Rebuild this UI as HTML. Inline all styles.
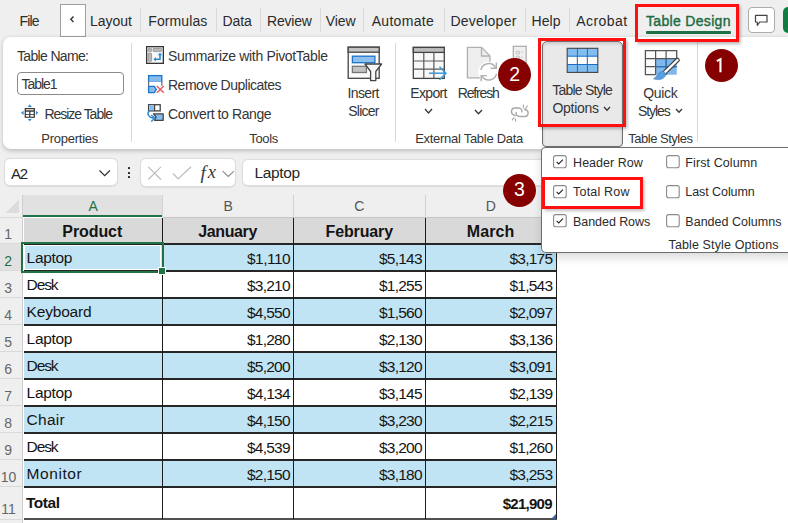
<!DOCTYPE html><html><head><meta charset="utf-8"><style>
html,body{margin:0;padding:0;}
body{width:788px;height:523px;overflow:hidden;position:relative;background:#efefef;font-family:"Liberation Sans",sans-serif;}
.t{position:absolute;white-space:nowrap;}
.b{position:absolute;}
svg.b{overflow:visible;}
</style></head><body>
<div class="t" style="left:19.50px;top:13.85px;font-size:14px;line-height:14px;color:#2b2b2b;letter-spacing:-0.847px;">File</div>
<div class="t" style="left:90.00px;top:13.85px;font-size:14px;line-height:14px;color:#2b2b2b;letter-spacing:-0.014px;">Layout</div>
<div class="t" style="left:148.30px;top:13.85px;font-size:14px;line-height:14px;color:#2b2b2b;letter-spacing:0.089px;">Formulas</div>
<div class="t" style="left:222.60px;top:13.85px;font-size:14px;line-height:14px;color:#2b2b2b;letter-spacing:-0.137px;">Data</div>
<div class="t" style="left:267.00px;top:13.85px;font-size:14px;line-height:14px;color:#2b2b2b;letter-spacing:-0.184px;">Review</div>
<div class="t" style="left:325.70px;top:13.85px;font-size:14px;line-height:14px;color:#2b2b2b;letter-spacing:-0.033px;">View</div>
<div class="t" style="left:371.70px;top:13.85px;font-size:14px;line-height:14px;color:#2b2b2b;letter-spacing:0.297px;">Automate</div>
<div class="t" style="left:450.40px;top:13.85px;font-size:14px;line-height:14px;color:#2b2b2b;letter-spacing:0.270px;">Developer</div>
<div class="t" style="left:531.40px;top:13.85px;font-size:14px;line-height:14px;color:#2b2b2b;letter-spacing:0.143px;">Help</div>
<div class="t" style="left:576.30px;top:13.85px;font-size:14px;line-height:14px;color:#2b2b2b;letter-spacing:0.412px;">Acrobat</div>
<div class="b" style="left:140px;top:8px;width:1.00px;height:24.00px;background:#d9d9d9;"></div>
<div class="b" style="left:216px;top:8px;width:1.00px;height:24.00px;background:#d9d9d9;"></div>
<div class="b" style="left:260px;top:8px;width:1.00px;height:24.00px;background:#d9d9d9;"></div>
<div class="b" style="left:320px;top:8px;width:1.00px;height:24.00px;background:#d9d9d9;"></div>
<div class="b" style="left:363px;top:8px;width:1.00px;height:24.00px;background:#d9d9d9;"></div>
<div class="b" style="left:444px;top:8px;width:1.00px;height:24.00px;background:#d9d9d9;"></div>
<div class="b" style="left:525px;top:8px;width:1.00px;height:24.00px;background:#d9d9d9;"></div>
<div class="b" style="left:569px;top:8px;width:1.00px;height:24.00px;background:#d9d9d9;"></div>
<div class="b" style="left:60px;top:3.5px;width:26.00px;height:33.00px;background:#fff;border:1px solid #a0a0a0;box-sizing:border-box;"></div>
<svg class="b" style="left:69px;top:15px" width="7" height="9" viewBox="0 0 7 9"><path d="M4.5 1.5 L1.8 4.3 L4.5 7" stroke="#333" stroke-width="1.4" fill="none"/></svg>
<div class="t" style="left:646.00px;top:13.85px;font-size:14px;line-height:14px;color:#1b6b3f;letter-spacing:0.325px;-webkit-text-stroke:0.4px #1b6b3f;">Table Design</div>
<div class="b" style="left:646px;top:31.3px;width:85.00px;height:2.50px;background:#1e7145;border-radius:1px;"></div>
<div class="b" style="left:748px;top:7.3px;width:26.50px;height:25.90px;background:#fff;border:1px solid #ababab;border-radius:4px;box-sizing:border-box;"></div>
<svg class="b" style="left:754px;top:14px" width="16" height="14" viewBox="0 0 16 14"><path d="M1.5 1.3 H13 V8 H5.8 L3.3 11.3 V8 H1.5 Z" stroke="#444" stroke-width="1.2" fill="none" stroke-linejoin="round"/></svg>
<div class="b" style="left:783.4px;top:7.3px;width:26.60px;height:26.20px;background:#107c41;border-radius:5px;"></div>
<div class="b" style="left:3px;top:37px;width:817.00px;height:111.50px;background:#fff;border-radius:8px;box-shadow:0 1.5px 4px rgba(0,0,0,.2);"></div>
<div class="b" style="left:131px;top:43px;width:1.00px;height:99.00px;background:#d8d8d8;"></div>
<div class="b" style="left:395.2px;top:43px;width:1.00px;height:99.00px;background:#d8d8d8;"></div>
<div class="b" style="left:697px;top:42px;width:1.00px;height:99.80px;background:#d8d8d8;"></div>
<div class="t" style="left:17.00px;top:48.85px;font-size:14px;line-height:14px;color:#353535;letter-spacing:-0.661px;">Table Name:</div>
<div class="b" style="left:17px;top:72px;width:106.50px;height:22.50px;border:1px solid #8a8a8a;border-radius:4px;box-sizing:border-box;background:#fff;"></div>
<div class="t" style="left:21.60px;top:77.15px;font-size:14px;line-height:14px;color:#353535;letter-spacing:-1.046px;">Table1</div>
<svg class="b" style="left:20px;top:103px" width="20" height="20" viewBox="0 0 20 20"><rect x="4.7" y="5" width="10.2" height="9.8" fill="#333"/>
<rect x="5.9" y="6.2" width="7.8" height="1.1" fill="#fff"/>
<rect x="5.9" y="8.7" width="3.3" height="2.4" fill="#fff"/><rect x="10.4" y="8.7" width="3.3" height="2.4" fill="#fff"/>
<rect x="5.9" y="11.9" width="3.3" height="1.8" fill="#fff"/><rect x="10.4" y="11.9" width="3.3" height="1.8" fill="#fff"/>
<path d="M9.8 1.3 L7.7 3.9 H11.9 Z M9.8 18.3 L7.7 15.9 H11.9 Z M1 9.8 L3.6 7.7 V11.9 Z M18.2 9.8 L15.9 7.7 V11.9 Z" fill="#2a8ad4"/></svg>
<div class="t" style="left:44.40px;top:106.55px;font-size:14px;line-height:14px;color:#353535;letter-spacing:-1.025px;">Resize Table</div>
<div class="t" style="left:41.30px;top:132.30px;font-size:13px;line-height:13px;color:#353535;letter-spacing:-0.253px;">Properties</div>
<svg class="b" style="left:145px;top:45px" width="20" height="20" viewBox="0 0 20 20"><rect x="1.65" y="1.65" width="16.7" height="16.7" fill="#f8f8f8" stroke="#333" stroke-width="1.3"/>
<rect x="3.3" y="3.3" width="3.3" height="3.3" rx="1" fill="#b8b8b8" stroke="#777" stroke-width=".6"/>
<rect x="8" y="3.3" width="8.6" height="3.3" rx="1" fill="#b8b8b8" stroke="#777" stroke-width=".6"/>
<rect x="3.3" y="8" width="3.3" height="8.6" rx="1" fill="#b8b8b8" stroke="#777" stroke-width=".6"/>
<path d="M10 14.3 H15 V9.5" stroke="#2a8ad4" stroke-width="1.6" fill="none"/>
<path d="M12.7 10.3 L15 7.7 L17.3 10.3 Z M10.9 12 L8.4 14.3 L10.9 16.6 Z" fill="#2a8ad4"/></svg>
<div class="t" style="left:168.00px;top:48.85px;font-size:14px;line-height:14px;color:#353535;letter-spacing:-0.336px;">Summarize with PivotTable</div>
<svg class="b" style="left:146px;top:74px" width="20" height="20" viewBox="0 0 20 20"><rect x="2.6" y="1.6" width="13.2" height="6" fill="#86bdf0" stroke="#1e73c8" stroke-width="1.3"/>
<rect x="2.6" y="7.6" width="13.2" height="4.2" fill="#fff"/><path d="M2.6 7.6 V11.8 M15.8 7.6 V11.8" stroke="#666" stroke-width="1.2"/>
<path d="M2.6 12.3 H8.3 L10.3 15.5 L8.3 18.6 H2.6 Z" fill="#86bdf0" stroke="#1e73c8" stroke-width="1.3"/>
<path d="M10.8 12 L17.8 18.8 M17.8 12 L10.8 18.8" stroke="#ee5a60" stroke-width="1.5"/></svg>
<div class="t" style="left:168.00px;top:77.75px;font-size:14px;line-height:14px;color:#353535;letter-spacing:-0.492px;">Remove Duplicates</div>
<svg class="b" style="left:146px;top:102px" width="20" height="20" viewBox="0 0 20 20"><rect x="2.6" y="2.7" width="11.6" height="6.2" fill="#fff" stroke="#444" stroke-width="1.3"/>
<rect x="3.3" y="3.4" width="5" height="4.8" fill="#86bdf0"/>
<path d="M8.6 2.7 V8.9" stroke="#444" stroke-width="1.2"/>
<path d="M7.5 11.8 H17.2 V18.3 H8.6 L10 15 Z" fill="#86bdf0" stroke="#444" stroke-width="1.3" stroke-linejoin="round"/>
<path d="M3.2 8.8 C1 11 1.5 15.5 8 16.2" stroke="#2a8ad4" stroke-width="1.5" fill="none"/>
<path d="M5.2 13 L8.8 16.2 L5.2 19.5" stroke="#2a8ad4" stroke-width="1.4" fill="none"/></svg>
<div class="t" style="left:168.00px;top:106.55px;font-size:14px;line-height:14px;color:#353535;letter-spacing:-0.411px;">Convert to Range</div>
<svg class="b" style="left:347px;top:46px" width="36" height="36" viewBox="0 0 36 36"><path d="M1.2 1.2 H32.2 V19 M18 32.3 H1.2 Z" fill="#fbfbfb"/>
<rect x="1.2" y="1.2" width="31" height="31.1" fill="#fbfbfb" stroke="#444" stroke-width="1.3"/>
<rect x="1.2" y="1.2" width="31" height="5" fill="#c4c4c4" stroke="#444" stroke-width="1.3"/>
<rect x="5.4" y="10.2" width="22.5" height="6.5" fill="#8ec1f0" stroke="#1e73c8" stroke-width="1.3"/>
<rect x="5.4" y="20.3" width="14" height="6.2" fill="#c4c4c4" stroke="#777" stroke-width="1.3"/>
<path d="M18 18 H34.6 L28.8 25.5 V34.6 H23.6 V25.5 Z" fill="#f6f6f6" stroke="#444" stroke-width="1.3" stroke-linejoin="round"/></svg>
<div class="t" style="left:347.60px;top:85.85px;font-size:14px;line-height:14px;color:#353535;letter-spacing:-0.640px;">Insert</div>
<div class="t" style="left:348.30px;top:103.75px;font-size:14px;line-height:14px;color:#353535;letter-spacing:-0.780px;">Slicer</div>
<div class="t" style="left:249.30px;top:132.30px;font-size:13px;line-height:13px;color:#353535;letter-spacing:-0.339px;">Tools</div>
<svg class="b" style="left:412px;top:46px" width="36" height="36" viewBox="0 0 36 36"><rect x="1.3" y="1.4" width="31" height="31" fill="#f8f8f8" stroke="#444" stroke-width="1.3"/>
<rect x="1.3" y="1.4" width="31" height="5" fill="#bdbdbd" stroke="#444" stroke-width="1.3"/>
<path d="M11.8 6.4 V32.4 M21.9 6.4 V32.4 M1.3 15 H32.3 M1.3 23.2 H32.3" stroke="#5a5a5a" stroke-width="1.2"/>
<path d="M17 27.2 H33.5" stroke="#3a9ad9" stroke-width="1.5"/>
<path d="M27.5 20.8 L34 27.2 L27.5 33.8" stroke="#3a9ad9" stroke-width="1.5" fill="none"/></svg>
<div class="t" style="left:410.30px;top:86.15px;font-size:14px;line-height:14px;color:#353535;letter-spacing:-0.652px;">Export</div>
<svg class="b" style="left:423.7px;top:107.6px" width="9" height="5.9" viewBox="0 0 9 5.9"><path d="M1 1 L4.5 4.9 L8 1" stroke="#3a3a3a" stroke-width="1.35" fill="none"/></svg>
<svg class="b" style="left:466px;top:46px" width="34" height="36" viewBox="0 0 34 36"><path d="M1.4 1.4 H15.5 L24 10 V31.9 H1.4 Z" fill="#efefef" stroke="#b0b0b0" stroke-width="1.3"/>
<path d="M15.5 1.4 V10 H24" fill="none" stroke="#b0b0b0" stroke-width="1.3"/>
<circle cx="22.6" cy="26" r="10.5" fill="#fff"/>
<path d="M14.9 23.8 A8 8 0 0 1 29.6 21.6 M30.5 27.9 A8 8 0 0 1 15.9 30.2" fill="none" stroke="#b0b0b0" stroke-width="1.5"/>
<path d="M30.3 16.4 V22.2 H24.6 M15.2 35.2 V29.6 H20.9" fill="none" stroke="#b0b0b0" stroke-width="1.4"/></svg>
<div class="t" style="left:457.70px;top:86.15px;font-size:14px;line-height:14px;color:#353535;letter-spacing:-1.133px;">Refresh</div>
<svg class="b" style="left:474.4px;top:108.7px" width="9" height="5.8" viewBox="0 0 9 5.8"><path d="M1 1 L4.5 4.8 L8 1" stroke="#3a3a3a" stroke-width="1.35" fill="none"/></svg>
<svg class="b" style="left:512px;top:45px" width="16" height="20" viewBox="0 0 16 20"><rect x="1.3" y="1.3" width="12.9" height="17" fill="#f0f0f0" stroke="#aaa" stroke-width="1.2"/>
<rect x="4.2" y="6.2" width="3.4" height="2.6" rx=".6" fill="none" stroke="#bbb" stroke-width=".9"/>
<path d="M9.4 7.2 H10.8 M9.4 12.2 H10.8" stroke="#bbb" stroke-width=".9"/>
<rect x="4.2" y="11.2" width="3.4" height="2.6" rx=".6" fill="none" stroke="#bbb" stroke-width=".9"/></svg>
<svg class="b" style="left:510px;top:103px" width="20" height="20" viewBox="0 0 20 20"><path d="M11.8 9.4 C12.4 7 11 5 8.5 5 H5 C2.5 5 1.5 6.8 1.5 8.6 C1.5 10.6 3 12.4 5.8 12.8" fill="none" stroke="#a8a8a8" stroke-width="1.4"/>
<path d="M6.2 8.8 C5.6 11.2 7 13.5 9.6 13.5 H14.5 C17 13.5 18.1 11.7 18.1 10 C18.1 8 16.4 6.6 14.2 6.2" fill="none" stroke="#a8a8a8" stroke-width="1.4"/>
<path d="M13.4 1.5 V5.5 M17.6 2.5 L15.2 6.2 M4.1 14.4 L2 17.4 M5.2 15.4 L5.7 18.6" stroke="#a8a8a8" stroke-width="1.1"/></svg>
<div class="t" style="left:415.20px;top:132.30px;font-size:13px;line-height:13px;color:#353535;letter-spacing:-0.283px;">External Table Data</div>
<div class="b" style="left:541.6px;top:41px;width:81.40px;height:105.50px;background:#e9e9e9;border:1px solid #6e6e6e;border-radius:5px 5px 4px 4px;box-sizing:border-box;box-shadow:inset 0 2px 3px rgba(0,0,0,.13);"></div>
<svg class="b" style="left:566px;top:47px" width="33" height="27" viewBox="0 0 33 27"><rect x="1.2" y="1.3" width="30.6" height="24.1" fill="#82bdf0"/>
<rect x="1.2" y="9.2" width="30.6" height="8.3" fill="#fbfbfb"/>
<path d="M11.4 1.3 V25.4 M21.4 1.3 V25.4" stroke="#1a6cc4" stroke-width="1"/>
<path d="M11.4 9.7 V17 M21.4 9.7 V17" stroke="#777" stroke-width="1"/>
<path d="M1.2 9.2 H31.8 M1.2 17.5 H31.8" stroke="#1a6cc4" stroke-width="1"/>
<rect x="1.2" y="1.3" width="30.6" height="24.1" fill="none" stroke="#444" stroke-width="1.1"/></svg>
<div class="t" style="left:552.20px;top:83.35px;font-size:14px;line-height:14px;color:#353535;letter-spacing:-0.776px;">Table Style</div>
<div class="t" style="left:552.50px;top:101.25px;font-size:14px;line-height:14px;color:#353535;letter-spacing:-0.288px;">Options</div>
<svg class="b" style="left:603.2px;top:105.9px" width="8" height="5.3" viewBox="0 0 8 5.3"><path d="M1 1 L4.0 4.3 L7 1" stroke="#3a3a3a" stroke-width="1.35" fill="none"/></svg>
<div class="b" style="left:537.7px;top:38px;width:88.30px;height:88.60px;border:3px solid #ff1010;box-sizing:border-box;box-shadow:1.5px 2px 3px rgba(0,0,0,.28);"></div>
<svg class="b" style="left:644px;top:49px" width="38" height="34" viewBox="0 0 38 34"><rect x="1.4" y="1.7" width="31.3" height="24" fill="#fbfbfb"/>
<rect x="11.6" y="9.7" width="21.1" height="16" fill="#7fb8ec"/>
<path d="M11.6 1.7 V25.7 M22.1 1.7 V25.7 M1.4 9.7 H32.7 M1.4 17.7 H32.7" stroke="#555" stroke-width="1.2"/>
<path d="M22.1 9.7 V25.7 M11.6 17.7 H32.7" stroke="#2a7ad0" stroke-width="1.1"/>
<path d="M32.7 9.7 V1.7 H1.4 V25.7 H11.6" fill="none" stroke="#555" stroke-width="1.3"/>
<path d="M33.5 11 L19.8 24.3" stroke="#444" stroke-width="4.6" stroke-linecap="round"/>
<path d="M33.5 11 L19.8 24.3" stroke="#fff" stroke-width="2.3" stroke-linecap="round"/>
<path d="M9.5 29.8 C12.5 28.5 14 23.5 17.5 22.6 C20.5 22 22.5 24.5 21.2 27 C19.5 30.5 14 31.5 9.5 29.8 Z" fill="#5a9ee0" stroke="#3a80c8" stroke-width=".6"/></svg>
<div class="t" style="left:643.20px;top:85.75px;font-size:14px;line-height:14px;color:#353535;letter-spacing:-0.335px;">Quick</div>
<div class="t" style="left:638.00px;top:103.55px;font-size:14px;line-height:14px;color:#353535;letter-spacing:-1.070px;">Styles</div>
<svg class="b" style="left:674.5px;top:108.3px" width="8" height="5.2" viewBox="0 0 8 5.2"><path d="M1 1 L4.0 4.2 L7 1" stroke="#3a3a3a" stroke-width="1.35" fill="none"/></svg>
<div class="t" style="left:628.30px;top:132.30px;font-size:13px;line-height:13px;color:#353535;letter-spacing:-0.497px;">Table Styles</div>
<div class="b" style="left:634.5px;top:3.5px;width:104.00px;height:38.50px;border:3px solid #ff1010;box-sizing:border-box;box-shadow:1.5px 2px 3px rgba(0,0,0,.3);"></div>
<div class="b" style="left:3.5px;top:158.2px;width:114.00px;height:28.10px;background:#fff;border:1px solid #dedede;border-radius:6px;box-sizing:border-box;box-shadow:0 .5px 1px rgba(0,0,0,.08);"></div>
<div class="t" style="left:11.00px;top:165.80px;font-size:15px;line-height:15px;color:#262626;letter-spacing:-1.375px;">A2</div>
<svg class="b" style="left:98px;top:169px" width="14" height="9" viewBox="0 0 14 9"><path d="M1.5 1.5 L6.7 6.7 L11.9 1.5" stroke="#333" stroke-width="1.3" fill="none"/></svg>
<div class="b" style="left:128.4px;top:167.1px;width:2.10px;height:2.10px;background:#222;border-radius:.6px;"></div>
<div class="b" style="left:128.4px;top:171.8px;width:2.10px;height:2.10px;background:#222;border-radius:.6px;"></div>
<div class="b" style="left:128.4px;top:176.4px;width:2.10px;height:2.10px;background:#222;border-radius:.6px;"></div>
<div class="b" style="left:140.2px;top:158.3px;width:95.80px;height:28.70px;background:#fff;border:1px solid #dedede;border-radius:6px;box-sizing:border-box;box-shadow:0 .5px 1px rgba(0,0,0,.08);"></div>
<svg class="b" style="left:147px;top:166px" width="16" height="15" viewBox="0 0 16 15"><path d="M1.3 0.8 L14 13.5 M14 0.8 L1.3 13.5" stroke="#bcbcbc" stroke-width="1.2"/></svg>
<svg class="b" style="left:172px;top:166px" width="20" height="15" viewBox="0 0 20 15"><path d="M1 7.5 L6.2 13 L19 0.8" stroke="#bcbcbc" stroke-width="1.2" fill="none"/></svg>
<div class="t" style="left:200.5px;top:162.9px;font-size:19px;line-height:19px;color:#3a3a3a;font-family:'Liberation Serif',serif;font-style:italic;">f</div>
<div class="t" style="left:207.8px;top:163.4px;font-size:18.5px;line-height:18.5px;color:#3a3a3a;font-family:'Liberation Serif',serif;font-style:italic;">x</div>
<svg class="b" style="left:222px;top:169.5px" width="13" height="8" viewBox="0 0 13 8"><path d="M0.7 1.1 L6.3 6.5 L11.9 1.1" stroke="#8a8a8a" stroke-width="1.1" fill="none"/></svg>
<div class="b" style="left:242.2px;top:158.5px;width:577.80px;height:27.80px;background:#fff;border:1px solid #dedede;border-radius:6px;box-sizing:border-box;box-shadow:0 .5px 1px rgba(0,0,0,.08);"></div>
<div class="t" style="left:254.40px;top:165.38px;font-size:15.5px;line-height:15.5px;color:#262626;letter-spacing:-0.326px;">Laptop</div>
<div class="b" style="left:0px;top:195px;width:788.00px;height:328.00px;background:#fff;"></div>
<div class="b" style="left:0px;top:195px;width:22.50px;height:328.00px;background:#efefef;"></div>
<div class="b" style="left:22px;top:195px;width:766.00px;height:22.00px;background:#efefef;"></div>
<svg class="b" style="left:5px;top:199px" width="15" height="15" viewBox="0 0 15 15"><path d="M14 0.5 V14 H0.5 Z" fill="#dcdcdc"/></svg>
<div class="b" style="left:22.5px;top:195px;width:139.50px;height:22.00px;background:#e1e1e1;"></div>
<div class="b" style="left:22.5px;top:214.8px;width:140.00px;height:2.70px;background:#217346;"></div>
<div class="b" style="left:162.5px;top:216.5px;width:625.50px;height:1.00px;background:#c6c6c6;"></div>
<div class="b" style="left:162px;top:195px;width:1.00px;height:22.00px;background:#d2d2d2;"></div>
<div class="b" style="left:293px;top:195px;width:1.00px;height:22.00px;background:#d2d2d2;"></div>
<div class="b" style="left:425px;top:195px;width:1.00px;height:22.00px;background:#d2d2d2;"></div>
<div class="b" style="left:555.5px;top:195px;width:1.00px;height:22.00px;background:#d2d2d2;"></div>
<div class="b" style="left:22px;top:195px;width:1.00px;height:328.00px;background:#cfcfcf;"></div>
<div class="t" style="left:88.51px;top:198.95px;font-size:14px;line-height:14px;color:#217346;">A</div>
<div class="t" style="left:223.54px;top:198.95px;font-size:14px;line-height:14px;color:#555;">B</div>
<div class="t" style="left:354.16px;top:198.95px;font-size:14px;line-height:14px;color:#555;">C</div>
<div class="t" style="left:485.66px;top:198.95px;font-size:14px;line-height:14px;color:#555;">D</div>
<div class="b" style="left:0px;top:217px;width:22.00px;height:1.00px;background:#dadada;"></div>
<div class="b" style="left:0px;top:243px;width:22.00px;height:1.00px;background:#dadada;"></div>
<div class="b" style="left:0px;top:270px;width:22.00px;height:1.00px;background:#dadada;"></div>
<div class="b" style="left:0px;top:297px;width:22.00px;height:1.00px;background:#dadada;"></div>
<div class="b" style="left:0px;top:324px;width:22.00px;height:1.00px;background:#dadada;"></div>
<div class="b" style="left:0px;top:351px;width:22.00px;height:1.00px;background:#dadada;"></div>
<div class="b" style="left:0px;top:378px;width:22.00px;height:1.00px;background:#dadada;"></div>
<div class="b" style="left:0px;top:405px;width:22.00px;height:1.00px;background:#dadada;"></div>
<div class="b" style="left:0px;top:432px;width:22.00px;height:1.00px;background:#dadada;"></div>
<div class="b" style="left:0px;top:459px;width:22.00px;height:1.00px;background:#dadada;"></div>
<div class="b" style="left:0px;top:486px;width:22.00px;height:1.00px;background:#dadada;"></div>
<div class="b" style="left:0px;top:518.5px;width:22.00px;height:1.00px;background:#dadada;"></div>
<div class="b" style="left:0px;top:243.5px;width:22.00px;height:26.50px;background:#e1e1e1;"></div>
<div class="t" style="left:4.31px;top:226.55px;font-size:14px;line-height:14px;color:#666;">1</div>
<div class="t" style="left:4.31px;top:253.55px;font-size:14px;line-height:14px;color:#217346;">2</div>
<div class="t" style="left:4.31px;top:280.55px;font-size:14px;line-height:14px;color:#666;">3</div>
<div class="t" style="left:4.31px;top:307.55px;font-size:14px;line-height:14px;color:#666;">4</div>
<div class="t" style="left:4.31px;top:334.55px;font-size:14px;line-height:14px;color:#666;">5</div>
<div class="t" style="left:4.31px;top:361.55px;font-size:14px;line-height:14px;color:#666;">6</div>
<div class="t" style="left:4.31px;top:388.55px;font-size:14px;line-height:14px;color:#666;">7</div>
<div class="t" style="left:4.31px;top:415.55px;font-size:14px;line-height:14px;color:#666;">8</div>
<div class="t" style="left:4.31px;top:442.55px;font-size:14px;line-height:14px;color:#666;">9</div>
<div class="t" style="left:0.83px;top:469.55px;font-size:14px;line-height:14px;color:#666;">10</div>
<div class="t" style="left:1.32px;top:502.05px;font-size:14px;line-height:14px;color:#666;">11</div>
<div class="b" style="left:23.5px;top:217.5px;width:532.00px;height:25.50px;background:#d9d9d9;"></div>
<div class="b" style="left:23.5px;top:243.5px;width:532.00px;height:26.50px;background:#c1e4f5;"></div>
<div class="b" style="left:23.5px;top:270.5px;width:532.00px;height:26.50px;background:#ffffff;"></div>
<div class="b" style="left:23.5px;top:297.5px;width:532.00px;height:26.50px;background:#c1e4f5;"></div>
<div class="b" style="left:23.5px;top:324.5px;width:532.00px;height:26.50px;background:#ffffff;"></div>
<div class="b" style="left:23.5px;top:351.5px;width:532.00px;height:26.50px;background:#c1e4f5;"></div>
<div class="b" style="left:23.5px;top:378.5px;width:532.00px;height:26.50px;background:#ffffff;"></div>
<div class="b" style="left:23.5px;top:405.5px;width:532.00px;height:26.50px;background:#c1e4f5;"></div>
<div class="b" style="left:23.5px;top:432.5px;width:532.00px;height:26.50px;background:#ffffff;"></div>
<div class="b" style="left:23.5px;top:459.5px;width:532.00px;height:26.50px;background:#c1e4f5;"></div>
<div class="b" style="left:23.5px;top:486.5px;width:532.00px;height:32.00px;background:#ffffff;"></div>
<div class="b" style="left:23.5px;top:242.9px;width:533.00px;height:1.70px;background:#262626;"></div>
<div class="b" style="left:23.5px;top:269.9px;width:533.00px;height:1.70px;background:#262626;"></div>
<div class="b" style="left:23.5px;top:296.9px;width:533.00px;height:1.70px;background:#262626;"></div>
<div class="b" style="left:23.5px;top:323.9px;width:533.00px;height:1.70px;background:#262626;"></div>
<div class="b" style="left:23.5px;top:350.9px;width:533.00px;height:1.70px;background:#262626;"></div>
<div class="b" style="left:23.5px;top:377.9px;width:533.00px;height:1.70px;background:#262626;"></div>
<div class="b" style="left:23.5px;top:404.9px;width:533.00px;height:1.70px;background:#262626;"></div>
<div class="b" style="left:23.5px;top:431.9px;width:533.00px;height:1.70px;background:#262626;"></div>
<div class="b" style="left:23.5px;top:458.9px;width:533.00px;height:1.70px;background:#262626;"></div>
<div class="b" style="left:23.5px;top:485.9px;width:533.00px;height:1.70px;background:#262626;"></div>
<div class="b" style="left:23.5px;top:518px;width:533.00px;height:1.60px;background:#505050;"></div>
<div class="b" style="left:162px;top:217.5px;width:1.20px;height:301.50px;background:#1c1c1c;"></div>
<div class="b" style="left:293px;top:217.5px;width:1.20px;height:301.50px;background:#1c1c1c;"></div>
<div class="b" style="left:425px;top:217.5px;width:1.20px;height:301.50px;background:#1c1c1c;"></div>
<div class="b" style="left:555.5px;top:217.5px;width:1.20px;height:301.50px;background:#1c1c1c;"></div>
<div class="t" style="left:62.30px;top:224.26px;font-size:16px;line-height:16px;color:#141414;font-weight:bold;letter-spacing:-0.080px;">Product</div>
<div class="t" style="left:198.30px;top:224.26px;font-size:16px;line-height:16px;color:#141414;font-weight:bold;letter-spacing:-0.393px;">January</div>
<div class="t" style="left:325.55px;top:224.26px;font-size:16px;line-height:16px;color:#141414;font-weight:bold;letter-spacing:-0.140px;">February</div>
<div class="t" style="left:466.70px;top:224.26px;font-size:16px;line-height:16px;color:#141414;font-weight:bold;letter-spacing:0.145px;">March</div>
<div class="t" style="left:26.60px;top:250.08px;font-size:15.5px;line-height:15.5px;color:#141414;letter-spacing:-0.326px;">Laptop</div>
<div class="t" style="left:247.00px;top:250.68px;font-size:15.5px;line-height:15.5px;color:#141414;letter-spacing:-0.533px;">$1,110</div>
<div class="t" style="left:379.00px;top:250.68px;font-size:15.5px;line-height:15.5px;color:#141414;letter-spacing:-0.766px;">$5,143</div>
<div class="t" style="left:509.50px;top:250.68px;font-size:15.5px;line-height:15.5px;color:#141414;letter-spacing:-0.766px;">$3,175</div>
<div class="t" style="left:26.60px;top:277.08px;font-size:15.5px;line-height:15.5px;color:#141414;letter-spacing:-1.139px;">Desk</div>
<div class="t" style="left:247.00px;top:277.68px;font-size:15.5px;line-height:15.5px;color:#141414;letter-spacing:-0.766px;">$3,210</div>
<div class="t" style="left:379.00px;top:277.68px;font-size:15.5px;line-height:15.5px;color:#141414;letter-spacing:-0.766px;">$1,255</div>
<div class="t" style="left:509.50px;top:277.68px;font-size:15.5px;line-height:15.5px;color:#141414;letter-spacing:-0.766px;">$1,543</div>
<div class="t" style="left:26.60px;top:304.08px;font-size:15.5px;line-height:15.5px;color:#141414;letter-spacing:-0.191px;">Keyboard</div>
<div class="t" style="left:247.00px;top:304.68px;font-size:15.5px;line-height:15.5px;color:#141414;letter-spacing:-0.766px;">$4,550</div>
<div class="t" style="left:379.00px;top:304.68px;font-size:15.5px;line-height:15.5px;color:#141414;letter-spacing:-0.766px;">$1,560</div>
<div class="t" style="left:509.50px;top:304.68px;font-size:15.5px;line-height:15.5px;color:#141414;letter-spacing:-0.766px;">$2,097</div>
<div class="t" style="left:26.60px;top:331.08px;font-size:15.5px;line-height:15.5px;color:#141414;letter-spacing:-0.326px;">Laptop</div>
<div class="t" style="left:247.00px;top:331.68px;font-size:15.5px;line-height:15.5px;color:#141414;letter-spacing:-0.766px;">$1,280</div>
<div class="t" style="left:379.00px;top:331.68px;font-size:15.5px;line-height:15.5px;color:#141414;letter-spacing:-0.766px;">$2,130</div>
<div class="t" style="left:509.50px;top:331.68px;font-size:15.5px;line-height:15.5px;color:#141414;letter-spacing:-0.766px;">$3,136</div>
<div class="t" style="left:26.60px;top:358.08px;font-size:15.5px;line-height:15.5px;color:#141414;letter-spacing:-1.139px;">Desk</div>
<div class="t" style="left:247.00px;top:358.68px;font-size:15.5px;line-height:15.5px;color:#141414;letter-spacing:-0.766px;">$5,200</div>
<div class="t" style="left:379.00px;top:358.68px;font-size:15.5px;line-height:15.5px;color:#141414;letter-spacing:-0.766px;">$3,120</div>
<div class="t" style="left:509.50px;top:358.68px;font-size:15.5px;line-height:15.5px;color:#141414;letter-spacing:-0.766px;">$3,091</div>
<div class="t" style="left:26.60px;top:385.08px;font-size:15.5px;line-height:15.5px;color:#141414;letter-spacing:-0.326px;">Laptop</div>
<div class="t" style="left:247.00px;top:385.68px;font-size:15.5px;line-height:15.5px;color:#141414;letter-spacing:-0.766px;">$4,134</div>
<div class="t" style="left:379.00px;top:385.68px;font-size:15.5px;line-height:15.5px;color:#141414;letter-spacing:-0.766px;">$3,145</div>
<div class="t" style="left:509.50px;top:385.68px;font-size:15.5px;line-height:15.5px;color:#141414;letter-spacing:-0.766px;">$2,139</div>
<div class="t" style="left:26.60px;top:412.08px;font-size:15.5px;line-height:15.5px;color:#141414;letter-spacing:0.239px;">Chair</div>
<div class="t" style="left:247.00px;top:412.68px;font-size:15.5px;line-height:15.5px;color:#141414;letter-spacing:-0.766px;">$4,150</div>
<div class="t" style="left:379.00px;top:412.68px;font-size:15.5px;line-height:15.5px;color:#141414;letter-spacing:-0.766px;">$3,230</div>
<div class="t" style="left:509.50px;top:412.68px;font-size:15.5px;line-height:15.5px;color:#141414;letter-spacing:-0.766px;">$2,215</div>
<div class="t" style="left:26.60px;top:439.08px;font-size:15.5px;line-height:15.5px;color:#141414;letter-spacing:-1.139px;">Desk</div>
<div class="t" style="left:247.00px;top:439.68px;font-size:15.5px;line-height:15.5px;color:#141414;letter-spacing:-0.766px;">$4,539</div>
<div class="t" style="left:379.00px;top:439.68px;font-size:15.5px;line-height:15.5px;color:#141414;letter-spacing:-0.766px;">$3,200</div>
<div class="t" style="left:509.50px;top:439.68px;font-size:15.5px;line-height:15.5px;color:#141414;letter-spacing:-0.766px;">$1,260</div>
<div class="t" style="left:26.60px;top:466.08px;font-size:15.5px;line-height:15.5px;color:#141414;letter-spacing:0.551px;">Monitor</div>
<div class="t" style="left:247.00px;top:466.68px;font-size:15.5px;line-height:15.5px;color:#141414;letter-spacing:-0.766px;">$2,150</div>
<div class="t" style="left:379.00px;top:466.68px;font-size:15.5px;line-height:15.5px;color:#141414;letter-spacing:-0.766px;">$3,180</div>
<div class="t" style="left:509.50px;top:466.68px;font-size:15.5px;line-height:15.5px;color:#141414;letter-spacing:-0.766px;">$3,253</div>
<div class="t" style="left:26.00px;top:495.28px;font-size:15.5px;line-height:15.5px;color:#141414;font-weight:bold;letter-spacing:-0.471px;">Total</div>
<div class="t" style="left:502.70px;top:495.70px;font-size:15px;line-height:15px;color:#141414;font-weight:bold;letter-spacing:-0.738px;">$21,909</div>
<div class="b" style="left:21.4px;top:242.3px;width:142.40px;height:30.50px;border:2.8px solid #217346;box-sizing:border-box;"></div>
<div class="b" style="left:24.2px;top:245.1px;width:136.80px;height:24.90px;border:1px solid #fff;box-sizing:border-box;"></div>
<div class="b" style="left:158.7px;top:267.6px;width:6.50px;height:6.50px;background:#217346;box-shadow:0 0 0 1px #fff;"></div>
<svg class="b" style="left:551px;top:514px" width="5" height="5" viewBox="0 0 5 5"><path d="M5 0 V5 H0 Z" fill="#3a5fb0"/></svg>
<div class="b" style="left:541.2px;top:146.5px;width:278.80px;height:106.30px;background:#fff;border:1px solid #6e6e6e;border-radius:4px 0 0 5px;box-sizing:border-box;box-shadow:0 5px 8px rgba(0,0,0,.14);"></div>
<svg class="b" style="left:553.3px;top:155.4px" width="14" height="14" viewBox="0 0 14 14"><rect x="0.6" y="0.6" width="12.6" height="12.2" rx="2" fill="#fff" stroke="#8a8a8a" stroke-width="1.1"/><path d="M3.6 6.9 L5.7 8.9 L9.9 4.7" stroke="#222" stroke-width="1.1" fill="none"/></svg>
<svg class="b" style="left:665.6px;top:155.4px" width="14" height="14" viewBox="0 0 14 14"><rect x="0.6" y="0.6" width="12.6" height="12.2" rx="2" fill="#fff" stroke="#8a8a8a" stroke-width="1.1"/></svg>
<div class="t" style="left:573.10px;top:157.32px;font-size:12.5px;line-height:12.5px;color:#2b2b2b;letter-spacing:0.022px;">Header Row</div>
<div class="t" style="left:685.30px;top:157.32px;font-size:12.5px;line-height:12.5px;color:#2b2b2b;letter-spacing:0.093px;">First Column</div>
<svg class="b" style="left:553.3px;top:184.5px" width="14" height="14" viewBox="0 0 14 14"><rect x="0.6" y="0.6" width="12.6" height="12.2" rx="2" fill="#fff" stroke="#8a8a8a" stroke-width="1.1"/><path d="M3.6 6.9 L5.7 8.9 L9.9 4.7" stroke="#222" stroke-width="1.1" fill="none"/></svg>
<svg class="b" style="left:665.6px;top:184.5px" width="14" height="14" viewBox="0 0 14 14"><rect x="0.6" y="0.6" width="12.6" height="12.2" rx="2" fill="#fff" stroke="#8a8a8a" stroke-width="1.1"/></svg>
<div class="t" style="left:573.10px;top:186.47px;font-size:12.5px;line-height:12.5px;color:#2b2b2b;letter-spacing:0.183px;">Total Row</div>
<div class="t" style="left:685.30px;top:186.47px;font-size:12.5px;line-height:12.5px;color:#2b2b2b;letter-spacing:-0.069px;">Last Column</div>
<svg class="b" style="left:553.3px;top:213.60000000000002px" width="14" height="14" viewBox="0 0 14 14"><rect x="0.6" y="0.6" width="12.6" height="12.2" rx="2" fill="#fff" stroke="#8a8a8a" stroke-width="1.1"/><path d="M3.6 6.9 L5.7 8.9 L9.9 4.7" stroke="#222" stroke-width="1.1" fill="none"/></svg>
<svg class="b" style="left:665.6px;top:213.60000000000002px" width="14" height="14" viewBox="0 0 14 14"><rect x="0.6" y="0.6" width="12.6" height="12.2" rx="2" fill="#fff" stroke="#8a8a8a" stroke-width="1.1"/></svg>
<div class="t" style="left:573.10px;top:215.62px;font-size:12.5px;line-height:12.5px;color:#2b2b2b;letter-spacing:-0.071px;">Banded Rows</div>
<div class="t" style="left:685.30px;top:215.62px;font-size:12.5px;line-height:12.5px;color:#2b2b2b;letter-spacing:0.025px;">Banded Columns</div>
<div class="t" style="left:668.50px;top:238.52px;font-size:12.5px;line-height:12.5px;color:#2b2b2b;letter-spacing:0.128px;">Table Style Options</div>
<div class="b" style="left:542.2px;top:176.6px;width:100.80px;height:32.20px;border:3px solid #ff1010;box-sizing:border-box;box-shadow:1.5px 2px 3px rgba(0,0,0,.25);"></div>
<div class="b" style="left:704.8px;top:49.0px;width:33.00px;height:33.00px;background:#870000;border-radius:50%;"></div>
<svg class="b" style="left:715.3px;top:57.5px" width="12" height="16" viewBox="0 0 12 16"><path d="M1.8 3.2 L5.45 1.2 V14.2" stroke="#fff" stroke-width="2.1" fill="none" stroke-linejoin="miter"/></svg>
<div class="b" style="left:498.20000000000005px;top:58.3px;width:33.00px;height:33.00px;background:#870000;border-radius:50%;"></div>
<div class="t" style="left:509.29px;top:64.59px;font-size:19.5px;line-height:19.5px;color:#fff;">2</div>
<div class="b" style="left:502.79999999999995px;top:173.9px;width:33.00px;height:33.00px;background:#870000;border-radius:50%;"></div>
<div class="t" style="left:513.89px;top:180.19px;font-size:19.5px;line-height:19.5px;color:#fff;">3</div>
</body></html>
